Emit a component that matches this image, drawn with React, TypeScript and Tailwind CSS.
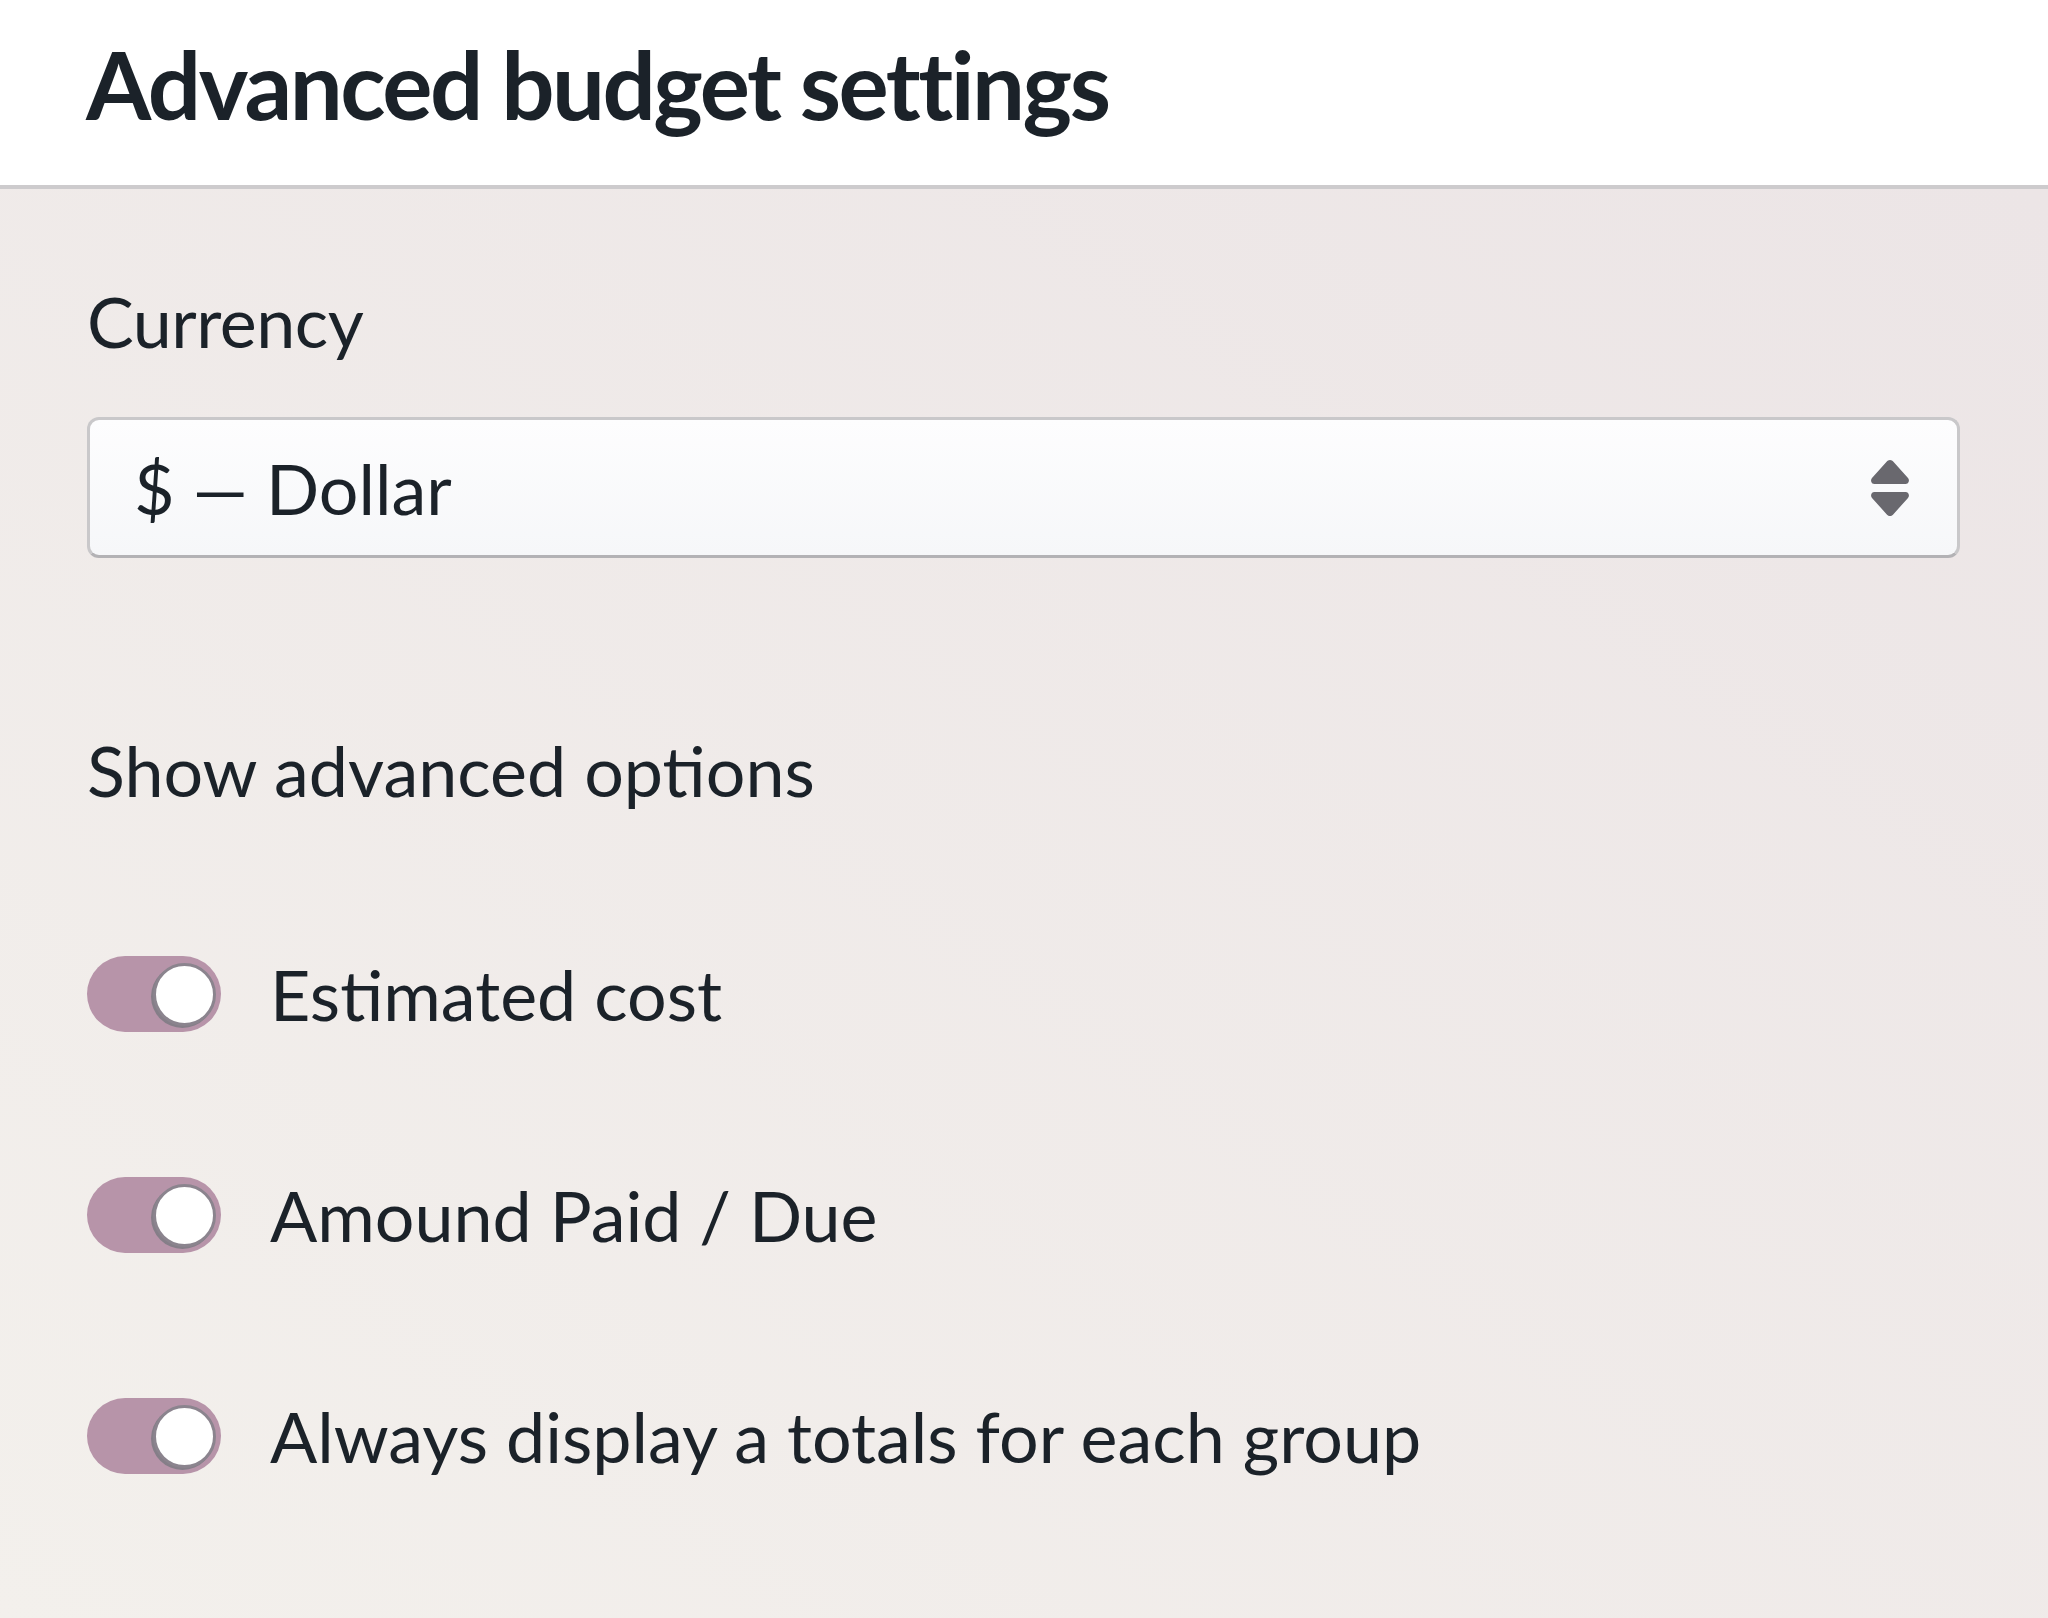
import React from 'react';

const font = { fontFamily: 'Lato, "Noto Sans", sans-serif' };

function Toggle() {
  return (
    <div className="relative w-[134px] h-[76px] rounded-full bg-[#b794a9] shrink-0">
      <div className="absolute right-[5px] top-[7px] w-[63px] h-[63px] rounded-full bg-white border-[3px] border-[#8b848e] shadow-[-2px_2px_0_#857e88]" />
    </div>
  );
}

function ToggleRow({ label }: { label: string }) {
  return (
    <div className="flex items-center gap-[49px]">
      <Toggle />
      <span className="text-[70px] leading-[70px] text-[#1b2229]">{label}</span>
    </div>
  );
}

export default function App() {
  return (
    <div className="w-[2048px] h-[1618px] flex flex-col overflow-hidden" style={font}>
      {/* Header */}
      <header className="h-[189px] shrink-0 bg-white border-b-4 border-[#cdcbcd] px-[86px] pt-[37px]">
        <h1 className="text-[94px] leading-[94px] font-bold text-[#1b2229] tracking-[-2.5px]">
          Advanced budget settings
        </h1>
      </header>

      {/* Body */}
      <main className="flex-1 bg-linear-to-tr from-[#f3f0ec] to-[#ece5e6] pl-[87px] pr-[88px] pt-[97px]">
        <label className="block text-[70px] leading-[70px] text-[#1b2229] tracking-[-0.5px]">Currency</label>

        <div className="mt-[61px] h-[141px] rounded-[12px] border-[3px] border-[#c9c8ca] border-b-[#b3b2b5] bg-linear-to-b from-[#fdfdfe] to-[#f6f7f9] flex items-center justify-between pl-[44px] pr-[46px]">
          <span className="text-[70px] leading-[70px] text-[#1b2229]">$ — Dollar</span>
          <svg width="42" height="60" viewBox="0 0 42 60" className="shrink-0">
            <path d="M21 2 C19.5 2 18.5 2.8 17.6 3.8 L3 20 C1 22.3 2.4 26 5.4 26 H36.6 C39.6 26 41 22.3 39 20 L24.4 3.8 C23.5 2.8 22.5 2 21 2 Z" fill="#69686e" />
            <path d="M21 58 C19.5 58 18.5 57.2 17.6 56.2 L3 40 C1 37.7 2.4 34 5.4 34 H36.6 C39.6 34 41 37.7 39 40 L24.4 56.2 C23.5 57.2 22.5 58 21 58 Z" fill="#69686e" />
          </svg>
        </div>

        <p className="mt-[177px] text-[70px] leading-[70px] text-[#1b2229]">Show advanced options</p>

        <div className="mt-[151px] flex flex-col gap-[145px]">
          <ToggleRow label="Estimated cost" />
          <ToggleRow label="Amound Paid / Due" />
          <ToggleRow label="Always display a totals for each group" />
        </div>
      </main>
    </div>
  );
}
